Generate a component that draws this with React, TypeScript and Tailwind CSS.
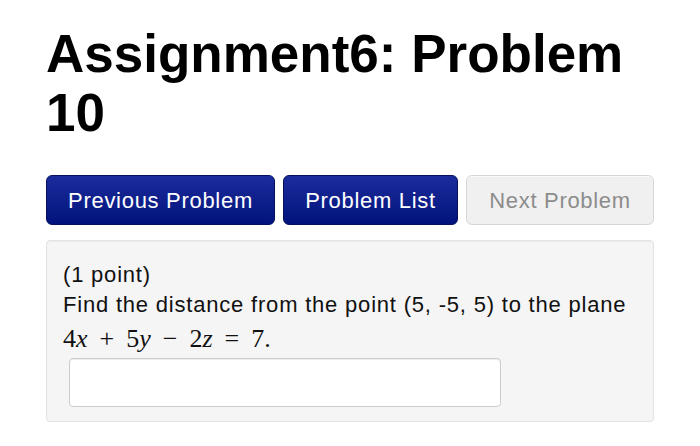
const sans = "font-['Liberation_Sans','Helvetica_Neue',Arial,sans-serif]";

function NavButton({
  label,
  width,
  disabled,
}: {
  label: string;
  width: string;
  disabled?: boolean;
}) {
  if (disabled) {
    return (
      <button
        disabled
        className={`${width} h-[50px] flex items-center justify-center rounded-[6px] border border-[#d6d6d6] bg-[#f0f0f0] text-[22px] tracking-[0.7px] text-[#8c8c8c] shadow-[inset_0_1px_0_rgba(255,255,255,0.6)]`}
      >
        {label}
      </button>
    );
  }
  return (
    <button
      className={`${width} h-[50px] flex items-center justify-center rounded-[6px] border border-[#04105c] bg-gradient-to-b from-[#1c2c9c] to-[#02127c] text-[22px] tracking-[0.7px] text-white`}
    >
      {label}
    </button>
  );
}

function Op({ children }: { children: React.ReactNode }) {
  return <span className="mx-[12px]">{children}</span>;
}

export default function App() {
  return (
    <div className={`min-h-screen bg-white px-[46px] pt-[24px] text-[#111] ${sans}`}>
      <h1 className="m-0 text-[53px] font-bold leading-[59px] text-black">
        Assignment6: Problem
        <br />
        10
      </h1>

      <div className="mt-[33px] flex gap-2">
        <NavButton label="Previous Problem" width="w-[229px]" />
        <NavButton label="Problem List" width="w-[175px]" />
        <NavButton label="Next Problem" width="w-[188px]" disabled />
      </div>

      <div className="mt-[15px] h-[182px] rounded-[4px] border border-[#e3e3e3] bg-[#f5f5f5] px-[16px] pt-[19px] shadow-[inset_0_1px_1px_rgba(0,0,0,0.04)]">
        <div className="text-[22px] leading-[30px] tracking-[0.8px]">(1 point)</div>
        <div className="text-[22px] leading-[30px] tracking-[0.8px]">
          Find the distance from the point (5, -5, 5) to the plane
        </div>
        <div className="mt-[1px] font-['Liberation_Serif','Times_New_Roman',serif] text-[26px] leading-[36px] whitespace-nowrap">
          4<i>x</i>
          <Op>+</Op>5<i>y</i>
          <Op>−</Op>2<i>z</i>
          <Op>=</Op>7.
        </div>
        <input
          type="text"
          className="mt-[1px] ml-[6px] block h-[49px] w-[432px] rounded-[4px] border border-[#cccccc] bg-white shadow-[inset_0_1px_1px_rgba(0,0,0,0.075)] outline-none"
        />
      </div>
    </div>
  );
}
